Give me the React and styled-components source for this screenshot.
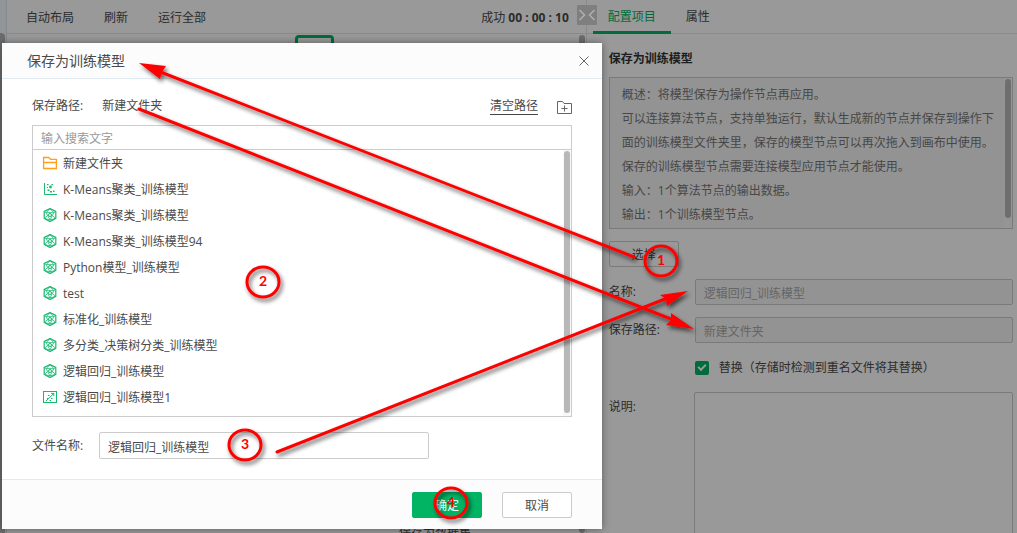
import React from 'react';
import styled, { createGlobalStyle, css } from 'styled-components';

const Global = createGlobalStyle`
  *, *::before, *::after { box-sizing: border-box; }
  html, body, #root { height: 100%; }
  body {
    margin: 0;
    overflow: hidden;
    background: #fff;
    color: #4a4a4a;
    font: 12px/24px "Open Sans", "Noto Sans CJK SC", sans-serif;
  }
  button, input, textarea { font: inherit; color: inherit; }
`;

const Page = styled.div`
  position: relative;
  display: flex;
  height: 100%;
  overflow: hidden;
`;

const Rail = styled.div`
  flex: none;
  width: 7px;
  background: #f3f8fc;
  border-right: 1px solid #dbe4ec;
  padding-top: 33px;
`;

const RailThumb = styled.div`
  width: 5px;
  height: 100%;
  border-radius: 0 4px 0 0;
  background: #b4b4b4;
`;

const Workspace = styled.main`
  flex: 1 1 0;
  min-width: 0;
  display: flex;
  flex-direction: column;
  border-right: 1px solid #e3e6ea;
`;

const Toolbar = styled.div`
  flex: none;
  display: flex;
  align-items: center;
  height: 34px;
  padding: 2px 17px 0 19px;
  gap: 30px;
  border-bottom: 1px solid #e3e6ea;
`;

const ToolButton = styled.button`
  padding: 0;
  border: 0;
  background: none;
  line-height: 24px;
`;

const Timer = styled.div`
  margin-left: auto;
  b { font-weight: 700; }
`;

const Canvas = styled.div`
  flex: 1;
  min-height: 0;
  position: relative;
  overflow: hidden;
`;

const Node = styled.div`
  position: absolute;
  left: 288px;
  top: 1px;
  width: 39px;
  height: 38px;
  border: 3px solid #00b464;
  border-radius: 4px;
`;

const NodeLabel = styled.div`
  position: absolute;
  left: 392px;
  top: 487px;
`;

const CanvasBar = styled.div`
  position: absolute;
  right: 1px;
  top: 1px;
  bottom: 0;
  width: 6px;
  border-radius: 3px;
  background: #b4b4b4;
`;

const Side = styled.aside`
  flex: none;
  width: 42.3%;
  display: flex;
  flex-direction: column;
  min-height: 0;
`;

const Tabs = styled.div`
  flex: none;
  display: flex;
  height: 34px;
  padding-left: 6px;
  border-bottom: 1px solid #e3e6ea;
`;

const Tab = styled.button`
  height: 34px;
  padding: 3px 15px 0;
  border: 0;
  border-bottom: 3px solid ${(p) => (p.$active ? '#00b464' : 'transparent')};
  background: none;
  color: ${(p) => (p.$active ? '#00b464' : 'inherit')};
`;

const SideBody = styled.div`
  flex: 1;
  min-height: 0;
  display: flex;
  flex-direction: column;
  padding: 13px 4px 0 22px;
`;

const SideTitle = styled.h2`
  margin: 0 0 6px;
  font-size: 12px;
  line-height: 24px;
  font-weight: 600;
  color: #333;
`;

const Description = styled.div`
  flex: none;
  display: flex;
  height: 152px;
  margin-bottom: 12px;
  border: 1px solid #ccc;
  background: #f5f5f5;
  color: #777;
  p { margin: 0; }
`;

const DescriptionText = styled.div`
  flex: 1;
  min-width: 0;
  padding: 5px 2px 0 12px;
`;

const Scrollbar = styled.div`
  flex: none;
  width: 8px;
  padding: 1px 1px ${(p) => p.$end}px;
  background: #f8f8f8;
  &::before {
    content: '';
    display: block;
    height: 100%;
    border-radius: 3px;
    background: #b8b8b8;
  }
`;

const control = css`
  border: 1px solid #ccc;
  border-radius: 2px;
  outline: 0;
`;

const Button = styled.button`
  ${control}
  flex: none;
  width: 70px;
  height: 26px;
  padding: 2px 0 0;
  line-height: 22px;
  background: ${(p) => (p.$primary ? '#00b464' : '#fff')};
  ${(p) => p.$primary && 'border-color: #00b464; color: #fff;'}
`;

const Field = styled.div`
  flex: none;
  display: flex;
  align-items: center;
  margin-top: ${(p) => p.$gap}px;
  label { flex: none; width: ${(p) => p.$label}px; }
`;

const Input = styled.input`
  ${control}
  flex: ${(p) => (p.$width ? 'none' : '1')};
  width: ${(p) => p.$width || 'auto'};
  min-width: 0;
  height: ${(p) => (p.$width ? 27 : 26)}px;
  padding: 2px 8px 0;
  background: #fff;
  &:disabled { background: #f5f5f5; color: #aaa; }
`;

const CheckRow = styled.label`
  flex: none;
  display: flex;
  align-items: center;
  gap: 10px;
  height: 24px;
  margin: 13px 0 12px 86px;
`;

const Check = styled.input`
  appearance: none;
  width: 14px;
  height: 14px;
  margin: 0;
  border-radius: 2px;
  background: #00b464;
  display: grid;
  place-items: center;
  &::before {
    content: '';
    width: 8px;
    height: 5px;
    margin-top: -3px;
    border: solid #fff;
    border-width: 0 0 2px 2px;
    transform: rotate(-45deg);
  }
`;

const NoteField = styled.div`
  flex: 1;
  display: flex;
  min-height: 0;
  label { flex: none; width: 85px; padding-top: 3px; }
`;

const TextArea = styled.textarea`
  ${control}
  flex: 1;
  min-width: 0;
  height: 180px;
  resize: none;
  background: #fff;
`;

const Mask = styled.div`
  position: absolute;
  inset: 0;
  background: rgba(0, 0, 0, 0.4);
`;

const Collapse = styled.button`
  position: absolute;
  left: 577px;
  top: 5px;
  width: 20px;
  height: 20px;
  padding: 0;
  border: 0;
  border-radius: 1px;
  background: #7f7f7f;
  svg { display: block; }
`;

const Dialog = styled.section`
  position: absolute;
  left: 2px;
  top: 43px;
  width: 600px;
  display: flex;
  flex-direction: column;
  background: #fff;
  box-shadow: 0 0 8px rgba(0, 0, 0, 0.4);
`;

const DialogHead = styled.header`
  display: flex;
  align-items: center;
  justify-content: space-between;
  height: 36px;
  padding: 0 12px 0 25px;
  border-bottom: 1px solid #e2eaf1;
  background: #fcfcfc;
  h1 { margin: 0; font-size: 14px; font-weight: 400; }
`;

const IconButton = styled.button`
  display: flex;
  padding: 0;
  border: 0;
  background: none;
`;

const DialogBody = styled.div`
  padding: 15px 30px 20px;
`;

const PathRow = styled.div`
  display: flex;
  align-items: center;
  height: 24px;
  margin-bottom: 7px;
  span { margin-left: 19px; }
  ${IconButton} { padding-top: 3px; }
`;

const ClearLink = styled.a`
  margin: 0 19px 0 auto;
  line-height: 17px;
  color: inherit;
  text-decoration: none;
  border-bottom: 1px solid #444;
`;

const Picker = styled.div`
  border: 1px solid #ccc;
`;

const Search = styled.input`
  display: block;
  width: 100%;
  height: 24px;
  padding: 2px 8px 0;
  border: 0;
  border-bottom: 1px solid #ccc;
  outline: 0;
  &::placeholder { color: #999; opacity: 1; }
`;

const ListWrap = styled.div`
  display: flex;
  height: 266px;
`;

const List = styled.ul`
  flex: 1;
  margin: 0;
  padding: 1px 0 0 9px;
  list-style: none;
`;

const Item = styled.li`
  display: flex;
  align-items: center;
  gap: 5px;
  height: 26px;
`;

const DialogFoot = styled.footer`
  display: flex;
  justify-content: flex-end;
  align-items: center;
  gap: 20px;
  height: 50px;
  padding: 0 30px;
  border-top: 1px solid #e8e8e8;
  background: #fcfcfc;
`;

const Marks = styled.svg`
  position: absolute;
  left: 0;
  top: 0;
  pointer-events: none;
  text {
    font: 700 14px Lato, sans-serif;
    fill: #f00;
    text-anchor: middle;
  }
`;

const FileIcon = styled.svg.attrs({ width: 16, height: 16, viewBox: '0 1 16 16', fill: 'none' })`
  flex: none;
  stroke: ${(p) => p.$color};
`;

const FolderIcon = () => (
  <FileIcon $color="#ff9f1a" strokeWidth="1.3">
    <path d="M1.6 13.5V2.5H6.6L8.6 4.3H14.4V13.5Z M1.6 7.5H14.4" />
  </FileIcon>
);

const ScatterIcon = () => (
  <FileIcon $color="#19b871">
    <path d="M2.5 2V13.5H15" />
    <g fill="#19b871" stroke="none">
      <circle cx="8.5" cy="6" r="1.4" />
      <path d="M5 3h1.5v1.2H5zM9.5 3h1.5v1.2H9.5zM5.5 8.5h2v1.5h-2zM8 10h2v1.5H8zM11 9.5h1.5v1.5H11zM5 6h1v1H5z" />
    </g>
  </FileIcon>
);

const ModelIcon = () => (
  <FileIcon $color="#19b871">
    <path d="M8 1.6L13.8 4.4V11.4L8 14.5L2.2 11.4V4.4Z" strokeWidth="1.2" />
    <path d="M8 1.6L4.2 5.6H11.8ZM2.2 4.4L4.2 5.6L8 13L11.8 5.6L13.8 4.4M2.2 11.4L5.6 8.6M13.8 11.4L10.4 8.6M2.2 11.4L8 13L13.8 11.4" strokeWidth="0.8" />
    <circle cx="8" cy="8" r="1.5" strokeWidth="1" />
  </FileIcon>
);

const RegressionIcon = () => (
  <FileIcon $color="#19b871">
    <rect x="1.5" y="2.5" width="13" height="11" />
    <path d="M4 12L11.8 4.4M9.2 4.4H11.8V7" strokeWidth="1" />
    <path d="M6 6.5h1.5M9 9.5h1.5M5 9.5h1.5M7.5 11.5H9" strokeWidth="1" />
  </FileIcon>
);

const icons = { folder: FolderIcon, scatter: ScatterIcon, model: ModelIcon, regression: RegressionIcon };

const files = [
  ['folder', '新建文件夹'],
  ['scatter', 'K-Means聚类_训练模型'],
  ['model', 'K-Means聚类_训练模型'],
  ['model', 'K-Means聚类_训练模型94'],
  ['model', 'Python模型_训练模型'],
  ['model', 'test'],
  ['model', '标准化_训练模型'],
  ['model', '多分类_决策树分类_训练模型'],
  ['model', '逻辑回归_训练模型'],
  ['regression', '逻辑回归_训练模型1'],
];

const steps = [
  [661, 261, '1'],
  [263, 282, '2'],
  [245, 445, '3'],
  [451, 503, '4'],
];

const Annotations = () => (
  <Marks width="1017" height="533" viewBox="0 0 1017 533" aria-hidden="true">
    <defs>
      <filter id="shade" x="-10%" y="-10%" width="120%" height="120%">
        <feDropShadow dx="2" dy="3" stdDeviation="2" floodColor="#000" floodOpacity="0.6" />
      </filter>
    </defs>
    <g filter="url(#shade)">
      <g stroke="#f00" strokeWidth="3" strokeLinecap="round" fill="none">
        <path d="M634 257L158 71" />
        <path d="M139 109L676 321" />
        <path d="M277 452L670 297" />
      </g>
      <g fill="#f00">
        <path d="M139 63L166 66L162 72L160 79Z" />
        <path d="M694 329L666 325L671 320L671 313Z" />
        <path d="M688 291L667 306L666 299L660 295Z" />
      </g>
      <g fill="none" stroke="#f00" strokeWidth="3">
        {steps.map(([x, y, n]) => (
          <ellipse key={n} cx={x} cy={y} rx="16" ry="15" />
        ))}
      </g>
    </g>
    {steps.map(([x, y, n]) => (
      <text key={n} x={x} y={y + 4}>{n}</text>
    ))}
  </Marks>
);

export default function App() {
  return (
    <Page>
      <Global />
      <Rail><RailThumb /></Rail>
      <Workspace>
        <Toolbar>
          <ToolButton>自动布局</ToolButton>
          <ToolButton>刷新</ToolButton>
          <ToolButton>运行全部</ToolButton>
          <Timer>成功 <b>00 : 00 : 10</b></Timer>
        </Toolbar>
        <Canvas>
          <Node />
          <NodeLabel>保存为数据集</NodeLabel>
          <CanvasBar />
        </Canvas>
      </Workspace>
      <Side>
        <Tabs>
          <Tab $active>配置项目</Tab>
          <Tab>属性</Tab>
        </Tabs>
        <SideBody>
          <SideTitle>保存为训练模型</SideTitle>
          <Description>
            <DescriptionText>
              <p>概述：将模型保存为操作节点再应用。</p>
              <p>可以连接算法节点，支持单独运行，默认生成新的节点并保存到操作下面的训练模型文件夹里，保存的模型节点可以再次拖入到画布中使用。</p>
              <p>保存的训练模型节点需要连接模型应用节点才能使用。</p>
              <p>输入：1个算法节点的输出数据。</p>
              <p>输出：1个训练模型节点。</p>
            </DescriptionText>
            <Scrollbar $end={10} />
          </Description>
          <Button>选择</Button>
          <Field $label={86} $gap={12}>
            <label htmlFor="name">名称:</label>
            <Input id="name" disabled defaultValue="逻辑回归_训练模型" />
          </Field>
          <Field $label={86} $gap={12}>
            <label htmlFor="path">保存路径:</label>
            <Input id="path" disabled defaultValue="新建文件夹" />
          </Field>
          <CheckRow>
            <Check type="checkbox" defaultChecked />
            替换（存储时检测到重名文件将其替换）
          </CheckRow>
          <NoteField>
            <label htmlFor="note">说明:</label>
            <TextArea id="note" />
          </NoteField>
        </SideBody>
      </Side>
      <Mask />
      <Collapse aria-label="收起">
        <svg width="20" height="20" viewBox="0 0 20 20" fill="none" stroke="#b0b0b0" strokeWidth="1.5">
          <path d="M2.5 5L7.5 10L2.5 15M17.5 5L12.5 10L17.5 15" />
        </svg>
      </Collapse>
      <Dialog role="dialog" aria-labelledby="dialog-title">
        <DialogHead>
          <h1 id="dialog-title">保存为训练模型</h1>
          <IconButton aria-label="关闭">
            <svg width="12" height="12" viewBox="0 0 12 12" stroke="#666" fill="none">
              <path d="M1.5 1.5L10.5 10.5M10.5 1.5L1.5 10.5" />
            </svg>
          </IconButton>
        </DialogHead>
        <DialogBody>
          <PathRow>
            保存路径:<span>新建文件夹</span>
            <ClearLink href="#clear">清空路径</ClearLink>
            <IconButton aria-label="新建">
              <svg width="15" height="15" viewBox="0 0 15 15" stroke="#666" fill="none">
                <path d="M.5 13.5V1.5H5.5L7 3.5H14.5V13.5ZM4.5 8.5H10.5M7.5 5.5V11.5" />
              </svg>
            </IconButton>
          </PathRow>
          <Picker>
            <Search placeholder="输入搜索文字" aria-label="输入搜索文字" />
            <ListWrap>
              <List>
                {files.map(([kind, name], i) => {
                  const Icon = icons[kind];
                  return <Item key={i}><Icon />{name}</Item>;
                })}
              </List>
              <Scrollbar $end={3} />
            </ListWrap>
          </Picker>
          <Field $label={67} $gap={15}>
            <label htmlFor="file">文件名称:</label>
            <Input id="file" $width="330px" defaultValue="逻辑回归_训练模型" />
          </Field>
        </DialogBody>
        <DialogFoot>
          <Button $primary>确定</Button>
          <Button>取消</Button>
        </DialogFoot>
      </Dialog>
      <Annotations />
    </Page>
  );
}
